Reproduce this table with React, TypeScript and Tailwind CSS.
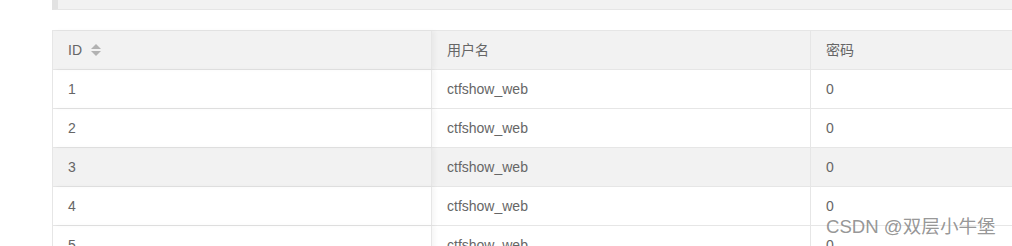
import React from 'react';

const rows = [
    { id: 1, name: 'ctfshow_web', pwd: '0' },
    { id: 2, name: 'ctfshow_web', pwd: '0' },
    { id: 3, name: 'ctfshow_web', pwd: '0', hover: true },
    { id: 4, name: 'ctfshow_web', pwd: '0' },
    { id: 5, name: 'ctfshow_web', pwd: '0' },
];

const SortIcon = () => (
    <svg width="10" height="12" viewBox="0 0 10 12" className="ml-[9px]">
        <path d="M5 0 L10 5 L0 5 Z" fill="#b2b2b2" />
        <path d="M0 7 L10 7 L5 12 Z" fill="#b2b2b2" />
    </svg>
);

export default function App() {
    return (
        <div
            className="relative w-[1012px] h-[246px] overflow-hidden bg-white pl-[52px] text-[14px] text-[#666]"
            style={{ fontFamily: '"Liberation Sans", Arial, "Noto Sans CJK SC", sans-serif' }}
        >
            <div className="h-[10px] w-[1000px] bg-[#f2f2f2] border-l-[6px] border-[#e2e2e2] border-b border-b-[#e6e6e6]" />

            <div className="mt-[20px] w-[1100px] border-t border-l border-[#e6e6e6]">
                <div className="flex h-[39px] bg-[#f2f2f2] border-b border-[#e6e6e6]">
                    <div className="w-[379px] flex items-center px-[15px] border-r border-[#e6e6e6] shadow-[3px_0_4px_rgba(0,0,0,0.04)]">
                        ID
                        <SortIcon />
                    </div>
                    <div className="w-[379px] flex items-center px-[15px] border-r border-[#e6e6e6]">用户名</div>
                    <div className="flex-1 flex items-center px-[15px]">密码</div>
                </div>
                {rows.map(r => (
                    <div
                        key={r.id}
                        className={`flex h-[39px] border-b border-[#e6e6e6] ${r.hover ? 'bg-[#f2f2f2]' : 'bg-white'}`}
                    >
                        <div className="w-[379px] flex items-center px-[15px] border-r border-[#e6e6e6] shadow-[3px_0_4px_rgba(0,0,0,0.04)]">
                            {r.id}
                        </div>
                        <div className="w-[379px] flex items-center px-[15px] border-r border-[#e6e6e6]">{r.name}</div>
                        <div className="flex-1 flex items-center px-[15px]">{r.pwd}</div>
                    </div>
                ))}
            </div>

            <div className="absolute left-[826px] top-[215px] text-[18.6px] leading-[24px] text-[#8a8a8a]/90 whitespace-nowrap">
                CSDN @双层小牛堡
            </div>
        </div>
    );
}
